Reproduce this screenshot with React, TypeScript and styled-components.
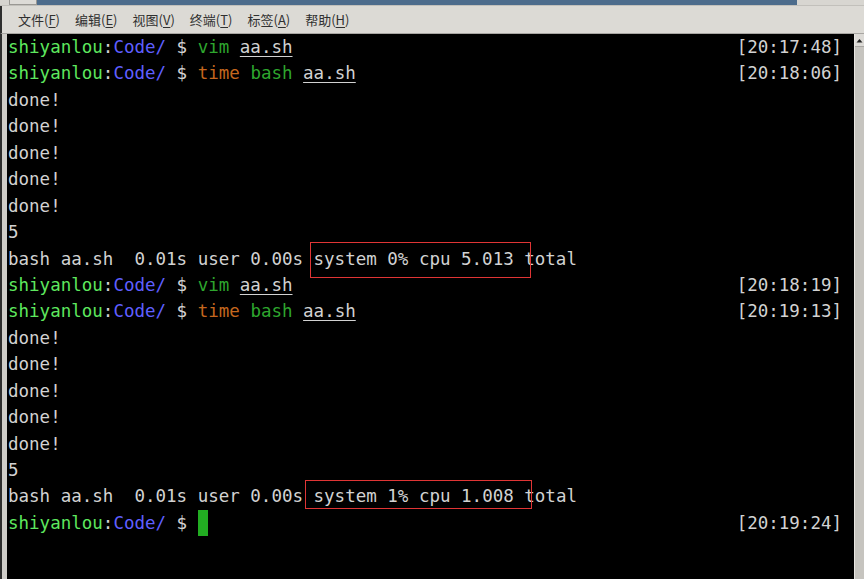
import React from "react";
import styled, { createGlobalStyle } from "styled-components";

const Global = createGlobalStyle`
  html, body { margin: 0; padding: 0; background: #000; }
  #root { width: 864px; height: 579px; overflow: hidden; }
`;

type Seg = { t: string; c?: string; u?: boolean };
type Box = { top: number; right: number; bottom: number; left: number };
type Line = { segs: Seg[]; time?: string; box?: { from: number; inset: Box }; cursor?: boolean };

const C = {
  user: "#5ee85e",
  dir: "#5f5fff",
  text: "#d2d2d2",
  cmd: "#2ea62e",
  kw: "#c4671e",
};

const prompt = (rest: Seg[]): Seg[] => [
  { t: "shiyanlou", c: C.user },
  { t: ":", c: C.text },
  { t: "Code/", c: C.dir },
  { t: " $ ", c: C.text },
  ...rest,
];

const vim = prompt([{ t: "vim", c: C.cmd }, { t: " " }, { t: "aa.sh", u: true }]);
const timeRun = prompt([
  { t: "time", c: C.kw },
  { t: " " },
  { t: "bash", c: C.cmd },
  { t: " " },
  { t: "aa.sh", u: true },
]);
const done = Array.from({ length: 5 }, () => ({ segs: [{ t: "done!" }] }));

const lines: Line[] = [
  { segs: vim, time: "[20:17:48]" },
  { segs: timeRun, time: "[20:18:06]" },
  ...done,
  { segs: [{ t: "5" }] },
  {
    segs: [{ t: "bash aa.sh  0.01s user 0.00s " }, { t: "system 0% cpu 5.013 " }, { t: "total" }],
    box: { from: 1, inset: { top: -7, right: -7, bottom: -9, left: -4 } },
  },
  { segs: vim, time: "[20:18:19]" },
  { segs: timeRun, time: "[20:19:13]" },
  ...done,
  { segs: [{ t: "5" }] },
  {
    segs: [{ t: "bash aa.sh  0.01s user 0.00s" }, { t: " system 1% cpu 1.008 " }, { t: "total" }],
    box: { from: 1, inset: { top: -6, right: -8, bottom: -3, left: 2 } },
  },
  { segs: prompt([]), time: "[20:19:24]", cursor: true },
];

const menus: [string, string][] = [
  ["文件", "F"],
  ["编辑", "E"],
  ["视图", "V"],
  ["终端", "T"],
  ["标签", "A"],
  ["帮助", "H"],
];

export default function App() {
  return (
    <>
      <Global />
      <Window>
        <TitleStrip>
          <TitleCorner />
          <TitleBlue />
          <TitleRest />
        </TitleStrip>
        <MenuBar>
          {menus.map(([label, key]) => (
            <MenuItem key={key}>
              {label}(<u>{key}</u>)
            </MenuItem>
          ))}
        </MenuBar>
        <Body>
          <LeftEdge />
          <Screen>
            {lines.map((line, i) => (
              <Row key={i}>
                <span>
                  {line.segs.map((s, j) => {
                    const inner = (
                      <Seg key={j} $c={s.c} $u={s.u}>
                        {s.t}
                      </Seg>
                    );
                    if (line.box && j === line.box.from) {
                      return (
                        <Marked key={j} $inset={line.box.inset}>
                          {inner}
                        </Marked>
                      );
                    }
                    return inner;
                  })}
                  {line.cursor && <Cursor>&nbsp;</Cursor>}
                </span>
                {line.time && <Stamp>{line.time}</Stamp>}
              </Row>
            ))}
          </Screen>
          <ScrollBar>
            <ScrollUp>
              <svg width="7" height="5" viewBox="0 0 7 5">
                <path d="M0.5 4.5 L3.5 1 L6.5 4.5 Z" fill="#222" />
              </svg>
            </ScrollUp>
          </ScrollBar>
        </Body>
      </Window>
    </>
  );
}

const Window = styled.div`
  width: 864px;
  height: 579px;
  display: flex;
  flex-direction: column;
  background: #dcdad5;
`;

const TitleStrip = styled.div`
  height: 5px;
  display: flex;
  background: #d6d4cf;
  border-bottom: 1px solid #c2c0bb;
`;

const TitleCorner = styled.div`
  width: 26px;
  margin-left: 9px;
  background: #dddbd7;
  border-right: 1px solid #9a9894;
  border-left: 1px solid #9a9894;
  border-bottom: 1px solid #9a9894;
`;

const TitleBlue = styled.div`
  width: 760px;
  background: #4d6c8c;
`;

const TitleRest = styled.div`
  flex: 1;
  background: #d8d6d1;
`;

const MenuBar = styled.div`
  height: 27px;
  display: flex;
  align-items: center;
  gap: 15px;
  padding-left: 16px;
  border-left: 2px solid #2e2e2e;
  border-bottom: 1px solid #a8a6a2;
  font-family: "Noto Sans CJK SC", "Noto Sans", sans-serif;
  font-size: 13px;
  color: #303030;
`;

const MenuItem = styled.span`
  white-space: nowrap;
  u {
    text-underline-offset: 2px;
  }
`;

const Body = styled.div`
  flex: 1;
  display: flex;
  min-height: 0;
`;

const LeftEdge = styled.div`
  width: 5px;
  background: #cfcdc8;
  border-left: 2px solid #2e2e2e;
`;

const Screen = styled.div`
  flex: 1;
  background: #000;
  padding: 0 12px 0 1px;
  font-family: "DejaVu Sans Mono", monospace;
  font-size: 17.5px;
  line-height: 26.45px;
  color: ${C.text};
  white-space: pre;
  overflow: hidden;
`;

const Row = styled.div`
  display: flex;
  justify-content: space-between;
  height: 26.45px;
`;

const Seg = styled.span<{ $c?: string; $u?: boolean }>`
  color: ${(p) => p.$c || "inherit"};
  text-decoration: ${(p) => (p.$u ? "underline" : "none")};
  text-underline-offset: 3px;
  text-decoration-thickness: 1px;
`;

const Marked = styled.span<{ $inset: Box }>`
  position: relative;
  &::after {
    content: "";
    position: absolute;
    top: ${(p) => p.$inset.top}px;
    right: ${(p) => p.$inset.right}px;
    bottom: ${(p) => p.$inset.bottom}px;
    left: ${(p) => p.$inset.left}px;
    border: 1px solid #e03535;
    pointer-events: none;
  }
`;

const Cursor = styled.span`
  display: inline-block;
  width: 10.5px;
  height: 26px;
  vertical-align: top;
  background: #22ad22;
`;

const Stamp = styled.span`
  color: ${C.text};
`;

const ScrollBar = styled.div`
  width: 9px;
  background: #c6c4bf;
  border-left: 1px solid #e8e6e2;
`;

const ScrollUp = styled.div`
  height: 12px;
  display: flex;
  align-items: center;
  justify-content: center;
  background: #dcdad6;
  border-bottom: 1px solid #a8a6a2;
`;
